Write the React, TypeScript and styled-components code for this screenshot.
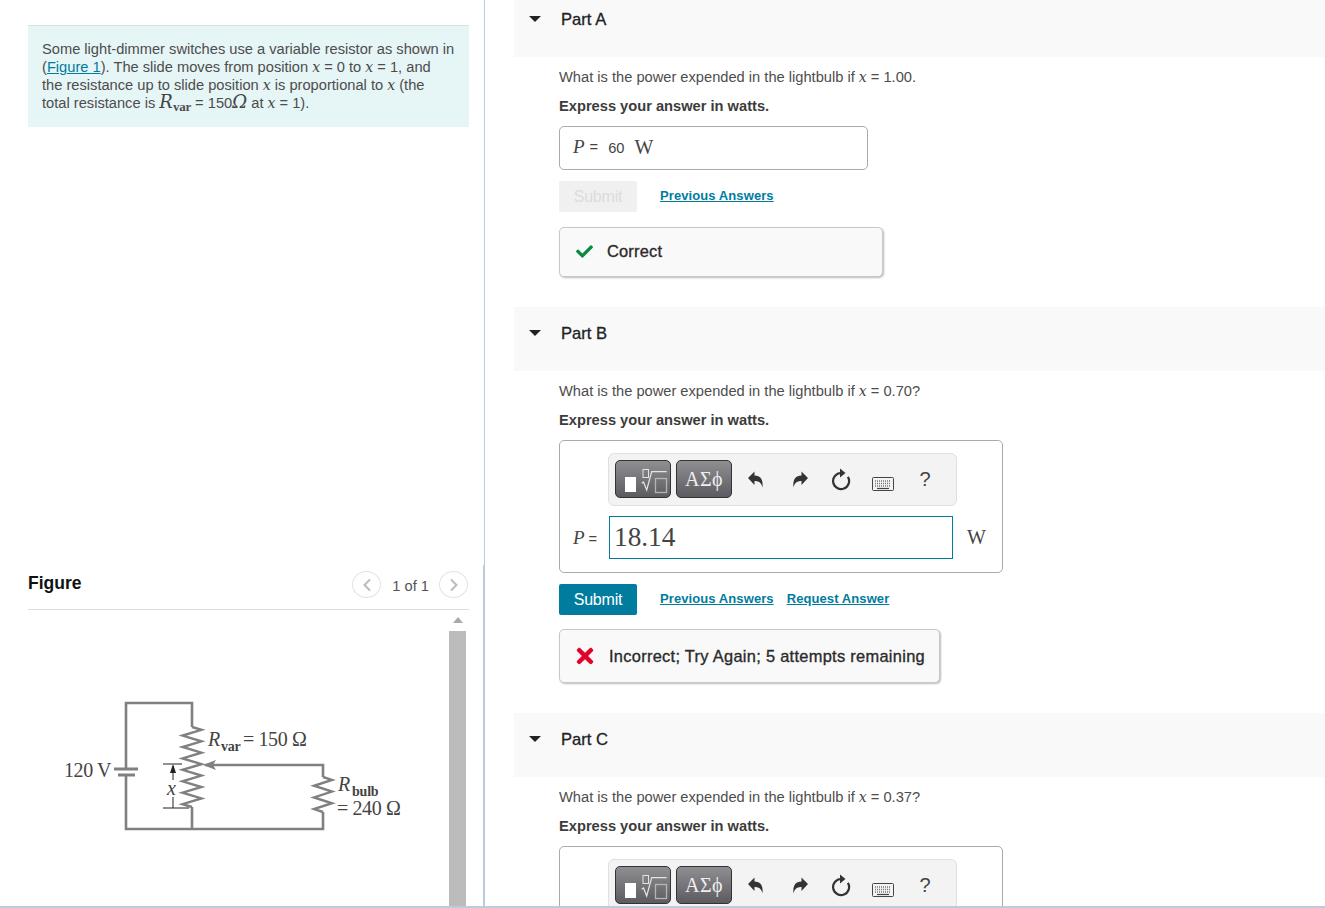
import * as React from 'react'
import styled, { createGlobalStyle } from 'styled-components'
import { FaCheck, FaTimes } from 'react-icons/fa'

const GlobalStyle = createGlobalStyle`
  html, body {
    margin: 0;
    padding: 0;
    background: #fff;
    overflow: hidden;
  }
  body {
    font-family: 'Liberation Sans', Arial, sans-serif;
    color: #4a4a4a;
  }
`

const Page = styled.div`
  display: flex;
  width: 1325px;
  height: 908px;
  box-sizing: border-box;
  border-bottom: 2px solid #bccbde;
  overflow: hidden;
`

// left column
const LeftPanel = styled.aside`
  flex: none;
  width: 485px;
  box-sizing: border-box;
  border-right: 1px solid #b8cbe0;
  display: flex;
  flex-direction: column;
`

const IntroPane = styled.div`
  flex: none;
  height: 565px;
  box-sizing: border-box;
  padding: 25px 15px 0 28px;
`

const Intro = styled.div`
  box-sizing: border-box;
  height: 102px;
  padding: 14px 14px 0;
  background: #e6f5f6;
  border-top: 1px solid #d3e2e3;
  font-size: 14.67px;
  line-height: 18px;
  color: #4d4d4d;
  white-space: nowrap;
`

const Link = styled.a`
  color: #007c9f;
  text-decoration: underline;
`

const MathVar = styled.i`
  font-family: 'DejaVu Serif', 'Liberation Serif', serif;
  font-size: 14px;
  line-height: 0;
  color: #444;
`

const MathBig = styled.i`
  font-family: 'DejaVu Serif', 'Liberation Serif', serif;
  font-size: 18px;
  line-height: 0;
  color: #444;
`

const MathSub = styled.span`
  font-family: 'Liberation Serif', serif;
  font-size: 13px;
  font-weight: bold;
  line-height: 0;
  position: relative;
  top: 3px;
  letter-spacing: -0.2px;
`

const FigurePane = styled.div`
  flex: 1;
  min-height: 0;
  box-sizing: border-box;
  padding: 5px 14px 0 28px;
  border-right: 1px solid #b8cbe0;
  display: flex;
  flex-direction: column;
`

const FigureHead = styled.div`
  height: 39px;
  flex: none;
  display: flex;
  align-items: flex-start;
  justify-content: space-between;
  border-bottom: 1px solid #dcdcdc;
`

const FigureTitle = styled.h3`
  margin: 3px 0 0;
  font-size: 17.5px;
  line-height: 20px;
  font-weight: bold;
  color: #111;
`

const Pager = styled.div`
  display: flex;
  align-items: center;
  margin: 1px 1px 0 0;
  font-size: 14.67px;
  color: #555;
`

const PagerButton = styled.span`
  width: 27px;
  height: 25px;
  border: 1px solid #e3e3e3;
  border-radius: 50%;
  display: flex;
  align-items: center;
  justify-content: center;
`

const PagerLabel = styled.span`
  margin: 2px 10px 0 11px;
`

const FigureBody = styled.div`
  flex: 1;
  min-height: 0;
  display: flex;
  justify-content: space-between;
`

const Scrollbar = styled.div`
  flex: none;
  width: 17px;
  margin-right: 3px;
  display: flex;
  flex-direction: column;
  align-items: center;
`

const ScrollArrow = styled.span`
  flex: none;
  margin-top: 7px;
  width: 0;
  height: 0;
  border-left: 5px solid transparent;
  border-right: 5px solid transparent;
  border-bottom: 6px solid #a9a9a9;
`

const ScrollThumb = styled.div`
  flex: 1;
  width: 100%;
  margin-top: 8px;
  background: #bcbcbc;
`

// right column
const RightPanel = styled.main`
  flex: 1;
  min-width: 0;
  padding-left: 29px;
`

const Sections = styled.div`
  margin-top: -7px;
`

const PartHeader = styled.div`
  height: 64px;
  box-sizing: border-box;
  display: flex;
  align-items: flex-start;
  padding: 18px 0 0 15px;
  background: #f9f9f9;
`

const Caret = styled.span`
  flex: none;
  margin-top: 5px;
  width: 0;
  height: 0;
  border-left: 6px solid transparent;
  border-right: 6px solid transparent;
  border-top: 6px solid #222;
`

const PartTitle = styled.h2`
  margin: 0 0 0 20px;
  font-size: 16.6px;
  line-height: 18px;
  font-weight: normal;
  color: #222;
  -webkit-text-stroke: 0.3px #222;
`

const PartBody = styled.section`
  padding: 11px 0 30px 45px;
`

const Question = styled.p`
  margin: 0 0 11px;
  font-size: 14.67px;
  line-height: 18px;
  color: #4d4d4d;
`

const Instruction = styled.p`
  margin: 0 0 11px;
  font-size: 14.67px;
  line-height: 18px;
  font-weight: bold;
  color: #3c3c3c;
`

const AnswerBox = styled.div`
  box-sizing: border-box;
  width: 309px;
  height: 44px;
  border: 1px solid #aaa;
  border-radius: 5px;
  display: flex;
  align-items: center;
  padding: 0 0 2px 13px;
  font-size: 14.67px;
  color: #444;
`

const AnswerVar = styled.i`
  font-family: 'Liberation Serif', serif;
  font-size: 19px;
  margin-right: 5px;
`

const AnswerValue = styled.span`
  margin: 2px 10px 0 10px;
  font-size: 14.67px;
`

const AnswerUnit = styled.span`
  font-family: 'Liberation Serif', serif;
  font-size: 20px;
`

const EditorBox = styled.div`
  box-sizing: border-box;
  width: 444px;
  height: 133px;
  border: 1px solid #aaa;
  border-radius: 5px;
  padding: 12px 0 0 48px;
`

const Toolbar = styled.div`
  box-sizing: border-box;
  width: 349px;
  height: 53px;
  padding: 6px;
  display: flex;
  align-items: flex-start;
  background: #f3f3f3;
  border: 1px solid #e0e0e0;
  border-radius: 6px;
`

const PaletteButton = styled.span`
  box-sizing: border-box;
  flex: none;
  width: 56px;
  height: 38px;
  margin-right: 5px;
  display: flex;
  align-items: center;
  justify-content: center;
  border: 1px solid #333;
  border-radius: 5px;
  background: linear-gradient(#8f8f93, #5c5c60);
  font-family: 'Liberation Serif', serif;
  font-size: 20px;
  letter-spacing: 0.4px;
  color: #eee;
`

const ToolIcon = styled.span<{ $width: number }>`
  flex: none;
  width: ${({ $width }) => $width}px;
  height: 38px;
  display: flex;
  align-items: center;
  justify-content: center;
  color: #333;
`

const HelpMark = styled.span`
  font-size: 20px;
  color: #444;
`

const EditorRow = styled.div`
  display: flex;
  align-items: center;
  margin: 10px 0 0 -35px;
`

const EditorLabel = styled.span`
  width: 36px;
  flex: none;
  font-size: 14.67px;
  color: #444;
`

const EditorVar = styled.i`
  font-family: 'Liberation Serif', serif;
  font-size: 19px;
  margin-right: 4px;
`

const EditorInput = styled.div`
  box-sizing: border-box;
  width: 344px;
  height: 43px;
  border: 1px solid #007c9f;
  padding-left: 4px;
  font-family: 'Liberation Serif', serif;
  font-size: 27.3px;
  line-height: 40px;
  color: #444;
  flex: none;
`

const EditorUnit = styled.span`
  margin-left: 14px;
  font-family: 'Liberation Serif', serif;
  font-size: 20px;
  color: #444;
`

const ButtonRow = styled.div`
  margin-top: 11px;
  display: flex;
  align-items: center;
`

const SubmitButton = styled.span<{ $disabled?: boolean }>`
  width: 78px;
  height: 31px;
  display: flex;
  align-items: center;
  justify-content: center;
  border-radius: 2px;
  font-size: 16px;
  letter-spacing: -0.2px;
  background: ${({ $disabled }) => ($disabled ? '#f0f0f0' : '#007c9f')};
  color: ${({ $disabled }) => ($disabled ? '#dcdcdc' : '#fff')};
`

const AnswerLink = styled.a`
  margin: 0 0 3px 23px;
  font-size: 13px;
  font-weight: bold;
  letter-spacing: 0.09px;
  color: #007c9f;
  text-decoration: underline;

  & + & {
    margin-left: 13px;
  }
`

const Feedback = styled.div<{ $wrong?: boolean }>`
  box-sizing: border-box;
  width: ${({ $wrong }) => ($wrong ? '381px' : '324px')};
  height: ${({ $wrong }) => ($wrong ? '54px' : '50px')};
  margin-top: ${({ $wrong }) => ($wrong ? '14px' : '15px')};
  padding: ${({ $wrong }) => ($wrong ? '1px 0 0 16px' : '0 0 2px 16px')};
  display: flex;
  align-items: center;
  background: #f9f9f9;
  border: 1px solid #c8c8c8;
  border-radius: 5px;
  box-shadow: 1px 1px 2px #bbb;
  color: ${({ $wrong }) => ($wrong ? '#e3002b' : '#0b8a43')};
`

const CrossIcon = styled(FaTimes)`
  flex: none;
  margin: -2px -5px 0 -3px;
`

const FeedbackText = styled.span<{ $wrong?: boolean }>`
  margin-left: ${({ $wrong }) => ($wrong ? '17px' : '14px')};
  font-size: 16.4px;
  letter-spacing: ${({ $wrong }) => ($wrong ? '0.3px' : '0.2px')};
  color: #2b2b2b;
  -webkit-text-stroke: 0.35px #2b2b2b;
`

const X = () => <MathVar>x</MathVar>

const Chevron = ({ left }: { left?: boolean }) => (
  <svg width="10" height="14" viewBox="0 0 10 14" fill="none" stroke="#bbb" strokeWidth="2">
    <path d={left ? 'M8 1.5 L2.5 7 L8 12.5' : 'M2 1.5 L7.5 7 L2 12.5'} />
  </svg>
)

const zigzag = (x: number, top: number, bottom: number, teeth: number, amp: number) => {
  const step = (bottom - top) / (teeth * 2)
  let d = `M${x} ${top}`
  for (let i = 0; i < teeth * 2; i++) {
    const side = i % 2 === 0 ? amp : -amp
    d += ` L${x + side} ${top + step * (i + 0.5)}`
  }
  return d + ` L${x} ${bottom}`
}

const CircuitText = styled.text`
  font-family: 'Liberation Serif', serif;
  font-size: 20px;
  fill: #444;
  letter-spacing: -0.4px;
`

const CircuitSub = styled(CircuitText)`
  font-size: 14px;
  font-weight: bold;
  letter-spacing: -0.2px;
`

const Circuit = () => (
  <svg width="421" height="297" viewBox="28 610 421 297">
    <g fill="none" stroke="#808080" strokeWidth="2.6">
      <path d="M126 769 V703 H192 V727" />
      <path d="M126 774 V829 H323 V812" />
      <path d="M192 807 V829" />
      <path d="M205 765 H323 V777" />
      <path d="M114 769 H138" strokeWidth="3" />
      <path d="M118 775 H135" strokeWidth="3" />
      <path d={zigzag(192, 727, 807, 7, 9.5)} strokeWidth="2.4" />
      <path d={zigzag(323, 777, 812, 3, 9)} strokeWidth="2.4" />
    </g>
    <path d="M203 765 L216 760 L213 765 L216 770 Z" fill="#808080" />
    <g fill="none" stroke="#222" strokeWidth="1">
      <path d="M163 764 H182" />
      <path d="M163 808 H189" />
      <path d="M173 766 V780" />
      <path d="M173 797 V808" />
    </g>
    <path d="M173 764 L176 773 L170 773 Z" fill="#222" />
    <CircuitText x="64" y="777">120 V</CircuitText>
    <CircuitText x="167" y="795" fontStyle="italic">x</CircuitText>
    <CircuitText x="208" y="746" fontStyle="italic">R</CircuitText>
    <CircuitSub x="221" y="751">var</CircuitSub>
    <CircuitText x="243" y="746">= 150 Ω</CircuitText>
    <CircuitText x="338" y="791" fontStyle="italic">R</CircuitText>
    <CircuitSub x="352" y="796">bulb</CircuitSub>
    <CircuitText x="337" y="815">= 240 Ω</CircuitText>
  </svg>
)

const RootIcon = () => (
  <svg width="54" height="36" viewBox="0 0 54 36">
    <rect x="9" y="16" width="11" height="15" fill="#fff" />
    <g fill="none">
      <rect x="27" y="8.5" width="5.5" height="8" stroke="#e4e4e4" />
      <path d="M25.7 22.3 L27.5 21 L30.7 29 L35.7 10.7 H50.7" stroke="#e4e4e4" strokeWidth="1.2" />
      <rect x="39.5" y="17.5" width="11" height="14" stroke="#b5b5b5" strokeWidth="1.3" />
    </g>
  </svg>
)

const ReplyIcon = ({ flip }: { flip?: boolean }) => (
  <svg width="18" height="19" viewBox="0 0 18 19" transform={flip ? 'scale(-1 1)' : undefined}>
    <path d="M1 8 L7.5 1.5 V5.5 C13 5.5 16.5 9 15.5 17.5 C14.5 13 12 11 7.5 11 V15 Z" fill="#333" />
  </svg>
)

const RefreshIcon = () => (
  <svg width="22" height="24" viewBox="0 0 22 24" fill="none">
    <path d="M17.9 9.8 A8 8 0 1 1 11 6" stroke="#333" strokeWidth="2.2" />
    <path d="M10 1.5 L15.5 6 L10 10.5 Z" fill="#333" />
  </svg>
)

const KeyboardIcon = () => (
  <svg width="22" height="24" viewBox="0 0 22 24">
    <rect x="0.5" y="10.5" width="21" height="13" rx="1" fill="#f3f3f3" stroke="#444" />
    <path d="M3 14 H19 M3 16.5 H19 M3 19 H19" stroke="#777" strokeWidth="1.4" strokeDasharray="1 1" />
    <path d="M5 21.5 H17" stroke="#444" strokeWidth="1.2" />
  </svg>
)

const EquationToolbar = () => (
  <Toolbar>
    <PaletteButton>
      <RootIcon />
    </PaletteButton>
    <PaletteButton>ΑΣϕ</PaletteButton>
    <ToolIcon $width={38}>
      <ReplyIcon />
    </ToolIcon>
    <ToolIcon $width={50}>
      <ReplyIcon flip />
    </ToolIcon>
    <ToolIcon $width={32}>
      <RefreshIcon />
    </ToolIcon>
    <ToolIcon $width={52}>
      <KeyboardIcon />
    </ToolIcon>
    <ToolIcon $width={32}>
      <HelpMark>?</HelpMark>
    </ToolIcon>
  </Toolbar>
)

const Part = ({ name, children }: { name: string; children: React.ReactNode }) => (
  <>
    <PartHeader>
      <Caret />
      <PartTitle>{name}</PartTitle>
    </PartHeader>
    <PartBody>{children}</PartBody>
  </>
)

export default function App() {
  return (
    <Page>
      <GlobalStyle />
      <LeftPanel>
        <IntroPane>
          <Intro>
            Some light-dimmer switches use a variable resistor as shown in
            <br />(<Link>Figure 1</Link>). The slide moves from position <X /> = 0 to <X /> = 1, and
            <br />the resistance up to slide position <X /> is proportional to <X /> (the
            <br />total resistance is <MathBig>R</MathBig>
            <MathSub>var</MathSub> = 150<MathBig>Ω</MathBig> at <X /> = 1).
          </Intro>
        </IntroPane>
        <FigurePane>
          <FigureHead>
            <FigureTitle>Figure</FigureTitle>
            <Pager>
              <PagerButton>
                <Chevron left />
              </PagerButton>
              <PagerLabel>1 of 1</PagerLabel>
              <PagerButton>
                <Chevron />
              </PagerButton>
            </Pager>
          </FigureHead>
          <FigureBody>
            <Circuit />
            <Scrollbar>
              <ScrollArrow />
              <ScrollThumb />
            </Scrollbar>
          </FigureBody>
        </FigurePane>
      </LeftPanel>
      <RightPanel>
        <Sections>
          <Part name="Part A">
            <Question>
              What is the power expended in the lightbulb if <X /> = 1.00.
            </Question>
            <Instruction>Express your answer in watts.</Instruction>
            <AnswerBox>
              <AnswerVar>P</AnswerVar>=<AnswerValue>60</AnswerValue>
              <AnswerUnit>W</AnswerUnit>
            </AnswerBox>
            <ButtonRow>
              <SubmitButton $disabled>Submit</SubmitButton>
              <AnswerLink>Previous Answers</AnswerLink>
            </ButtonRow>
            <Feedback>
              <FaCheck size={17} />
              <FeedbackText>Correct</FeedbackText>
            </Feedback>
          </Part>
          <Part name="Part B">
            <Question>
              What is the power expended in the lightbulb if <X /> = 0.70?
            </Question>
            <Instruction>Express your answer in watts.</Instruction>
            <EditorBox>
              <EquationToolbar />
              <EditorRow>
                <EditorLabel>
                  <EditorVar>P</EditorVar>=
                </EditorLabel>
                <EditorInput>18.14</EditorInput>
                <EditorUnit>W</EditorUnit>
              </EditorRow>
            </EditorBox>
            <ButtonRow>
              <SubmitButton>Submit</SubmitButton>
              <AnswerLink>Previous Answers</AnswerLink>
              <AnswerLink>Request Answer</AnswerLink>
            </ButtonRow>
            <Feedback $wrong>
              <CrossIcon size={24} />
              <FeedbackText $wrong>Incorrect; Try Again; 5 attempts remaining</FeedbackText>
            </Feedback>
          </Part>
          <Part name="Part C">
            <Question>
              What is the power expended in the lightbulb if <X /> = 0.37?
            </Question>
            <Instruction>Express your answer in watts.</Instruction>
            <EditorBox>
              <EquationToolbar />
            </EditorBox>
          </Part>
        </Sections>
      </RightPanel>
    </Page>
  )
}
